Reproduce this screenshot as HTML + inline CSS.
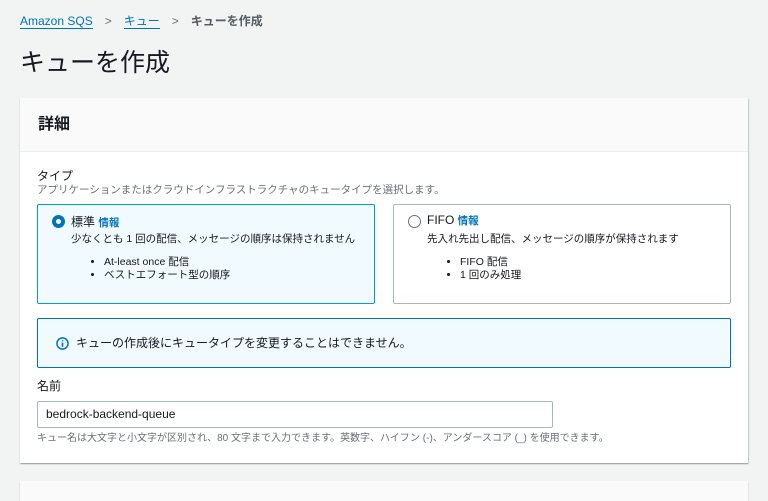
<!DOCTYPE html>
<html><head><meta charset="utf-8"><style>
*{margin:0;padding:0;box-sizing:border-box}
body{width:768px;height:495px;overflow:hidden;background:#f2f3f3;font-family:"Liberation Sans","Noto Sans CJK JP",sans-serif;color:#16191f;position:relative}
.a{position:absolute;white-space:nowrap}
.link{color:#0073bb;border-bottom:1px solid #0073bb}
.card{position:absolute;left:20px;top:98px;width:728px;height:365px;background:#fff;box-shadow:0 1px 1px rgba(0,28,36,.3),1px 1px 1px rgba(0,28,36,.15)}
.hd{position:absolute;left:0;top:0;width:728px;height:54px;background:#fafafa;border-bottom:1px solid #eaeded}
.tile{position:absolute;top:204px;width:338px;height:100px;border:1px solid #aab7b8;border-radius:2px;background:#fff}
.sel{background:#f1faff;border-color:#00a1c9}
.r{position:absolute;left:14px;top:10px;width:13px;height:13px;border-radius:50%}
ul{position:absolute;left:66px;font-size:10.5px;line-height:13px}
</style></head><body>
<div class="a" style="left:20px;top:13px;font-size:12px;line-height:16px"><span class="link">Amazon SQS</span><span style="color:#687078;margin:0 12px">&gt;</span><span class="link">キュー</span><span style="color:#687078;margin:0 12px">&gt;</span><span style="color:#545b64;font-weight:bold">キューを作成</span></div>
<div class="a" style="left:20px;top:47px;font-size:25px;line-height:32px">キューを作成</div>
<div class="card"><div class="hd"></div><div class="a" style="left:18px;top:16px;font-size:16px;font-weight:bold;line-height:22px">詳細</div></div>
<div class="a" style="left:37px;top:168px;font-size:12px;line-height:16px">タイプ</div>
<div class="a" style="left:37px;top:184px;font-size:10.5px;line-height:13px;color:#687078">アプリケーションまたはクラウドインフラストラクチャのキュータイプを選択します。</div>
<div class="tile sel" style="left:37px"><div class="r" style="border:4px solid #0073bb;background:#fff"></div>
<div class="a" style="left:33px;top:8px;font-size:12px"><span>標準</span> <span style="color:#0073bb;font-weight:bold;font-size:10.5px">情報</span></div>
<div class="a" style="left:33px;top:26px;font-size:10.5px">少なくとも 1 回の配信、メッセージの順序は保持されません</div>
<ul style="top:51px"><li>At-least once 配信</li><li>ベストエフォート型の順序</li></ul></div>
<div class="tile" style="left:393px"><div class="r" style="border:1px solid #687078"></div>
<div class="a" style="left:33px;top:8px;font-size:12px"><span>FIFO</span> <span style="color:#0073bb;font-weight:bold;font-size:10.5px">情報</span></div>
<div class="a" style="left:33px;top:26px;font-size:10.5px">先入れ先出し配信、メッセージの順序が保持されます</div>
<ul style="top:51px"><li>FIFO 配信</li><li>1 回のみ処理</li></ul></div>
<div class="a" style="left:37px;top:318px;width:694px;height:50px;background:#f1faff;border:1px solid #0073bb;border-radius:2px">
<svg class="a" style="left:18px;top:18px" width="13" height="13" viewBox="0 0 14 14"><circle cx="7" cy="7" r="6" fill="none" stroke="#0073bb" stroke-width="1.6"/><path d="M7 6v4.5M7 3.5v1.2" stroke="#0073bb" stroke-width="1.8"/></svg>
<div class="a" style="left:38px;top:16px;font-size:12px;line-height:16px">キューの作成後にキュータイプを変更することはできません。</div></div>
<div class="a" style="left:37px;top:378px;font-size:12px;line-height:16px">名前</div>
<div class="a" style="left:37px;top:401px;width:516px;height:27px;border:1px solid #aab7b8;border-radius:2px;background:#fff;font-size:12px;line-height:25px;padding-left:8px">bedrock-backend-queue</div>
<div class="a" style="left:37px;top:432px;font-size:10px;line-height:13px;color:#687078">キュー名は大文字と小文字が区別され、80 文字まで入力できます。英数字、ハイフン (-)、アンダースコア (_) を使用できます。</div>
<div class="a" style="left:20px;top:481px;width:728px;height:20px;background:#fafafa;box-shadow:0 1px 1px rgba(0,28,36,.3)"></div>
</body></html>
